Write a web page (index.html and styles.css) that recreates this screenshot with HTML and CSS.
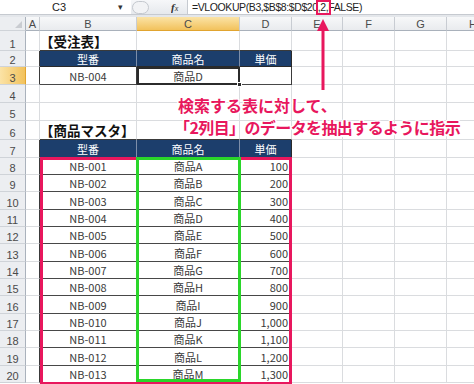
FILE: index.html
```html
<!DOCTYPE html>
<html lang="ja">
<head>
  <meta charset="UTF-8">
  <title>VLOOKUP 列番号</title>
  <link rel="stylesheet" href="styles.css">
</head>
<body>
  <div class="app">

    <!-- FORMULA BAR -->
    <div class="fbar">
      <div class="name-box">
        <span class="name">C3</span>
        <span class="dd">&#9662;</span>
      </div>
      <div class="grip"><span></span></div>
      <div class="fx"><i>f</i><small>x</small></div>
      <div class="formula">=VLOOKUP(B3,$B$8:$D$20,<span class="hl">2,</span>FALSE)</div>
    </div>
    <div class="fbar-gap"></div>

    <!-- SHEET -->
    <table class="sheet">
      <colgroup>
        <col class="c-rh"><col class="c-a"><col class="c-b"><col class="c-c"><col class="c-d">
        <col class="c-e"><col class="c-f"><col class="c-g"><col class="c-h">
      </colgroup>
      <tr class="colhdr">
        <th class="corner"><span></span></th><th>A</th><th>B</th><th class="sel">C</th><th>D</th><th>E</th><th>F</th><th>G</th><th>H</th>
      </tr>
      <tr class="h20">
        <th>1</th><td></td><td class="title bb">【受注表】</td><td class="bb"></td><td class="bb"></td><td></td><td></td><td></td><td></td>
      </tr>
      <tr class="h16">
        <th>2</th><td class="br"></td><td class="hd">型番</td><td class="hd">商品名</td><td class="hd last">単価</td><td></td><td></td><td></td><td></td>
      </tr>
      <tr class="h18">
        <th class="sel">3</th><td class="br"></td><td class="dt">NB-004</td><td class="dt active">商品D</td><td class="dt"></td><td></td><td></td><td></td><td></td>
      </tr>
      <tr class="h18">
        <th>4</th><td></td><td></td><td></td><td></td><td></td><td></td><td></td><td></td>
      </tr>
      <tr class="h18">
        <th>5</th><td></td><td></td><td></td><td></td><td></td><td></td><td></td><td></td>
      </tr>
      <tr class="h19">
        <th>6</th><td></td><td class="title bb">【商品マスタ】</td><td class="bb"></td><td class="bb"></td><td></td><td></td><td></td><td></td>
      </tr>
      <tr class="h18">
        <th>7</th><td class="br"></td><td class="hd">型番</td><td class="hd">商品名</td><td class="hd last">単価</td><td></td><td></td><td></td><td></td>
      </tr>
      <tr class="h17"><th>8</th><td class="br"></td><td class="dt">NB-001</td><td class="dt">商品A</td><td class="dt num">100</td><td></td><td></td><td></td><td></td></tr>
      <tr class="h17"><th>9</th><td class="br"></td><td class="dt">NB-002</td><td class="dt">商品B</td><td class="dt num">200</td><td></td><td></td><td></td><td></td></tr>
      <tr class="h18"><th>10</th><td class="br"></td><td class="dt">NB-003</td><td class="dt">商品C</td><td class="dt num">300</td><td></td><td></td><td></td><td></td></tr>
      <tr class="h17"><th>11</th><td class="br"></td><td class="dt">NB-004</td><td class="dt">商品D</td><td class="dt num">400</td><td></td><td></td><td></td><td></td></tr>
      <tr class="h17"><th>12</th><td class="br"></td><td class="dt">NB-005</td><td class="dt">商品E</td><td class="dt num">500</td><td></td><td></td><td></td><td></td></tr>
      <tr class="h18"><th>13</th><td class="br"></td><td class="dt">NB-006</td><td class="dt">商品F</td><td class="dt num">600</td><td></td><td></td><td></td><td></td></tr>
      <tr class="h17"><th>14</th><td class="br"></td><td class="dt">NB-007</td><td class="dt">商品G</td><td class="dt num">700</td><td></td><td></td><td></td><td></td></tr>
      <tr class="h17"><th>15</th><td class="br"></td><td class="dt">NB-008</td><td class="dt">商品H</td><td class="dt num">800</td><td></td><td></td><td></td><td></td></tr>
      <tr class="h18"><th>16</th><td class="br"></td><td class="dt">NB-009</td><td class="dt">商品I</td><td class="dt num">900</td><td></td><td></td><td></td><td></td></tr>
      <tr class="h17"><th>17</th><td class="br"></td><td class="dt">NB-010</td><td class="dt">商品J</td><td class="dt num">1,000</td><td></td><td></td><td></td><td></td></tr>
      <tr class="h17"><th>18</th><td class="br"></td><td class="dt">NB-011</td><td class="dt">商品K</td><td class="dt num">1,100</td><td></td><td></td><td></td><td></td></tr>
      <tr class="h18"><th>19</th><td class="br"></td><td class="dt">NB-012</td><td class="dt">商品L</td><td class="dt num">1,200</td><td></td><td></td><td></td><td></td></tr>
      <tr class="h17"><th>20</th><td class="br"></td><td class="dt">NB-013</td><td class="dt">商品M</td><td class="dt num">1,300</td><td></td><td></td><td></td><td></td></tr>
    </table>

    <!-- Annotations drawn over the sheet -->
    <div class="mark mark-range"></div>
    <div class="mark mark-col"></div>

    <svg class="arrow" width="16" height="76" viewBox="0 0 16 76">
      <polygon points="8,2 2,14 14,14" fill="#e8175d"/>
      <rect x="6.5" y="12" width="3" height="61" fill="#e8175d"/>
    </svg>

    <div class="note">
      <div class="l1">検索する表に対して、</div>
      <div class="l2">「2列目」のデータを抽出するように指示</div>
    </div>

  </div>
</body>
</html>
```

FILE: styles.css
```css
body {
  margin: 0;
  background: #fff;
  font-family: "Liberation Sans", Arial, sans-serif;
  overflow: hidden;
}

.app {
  position: relative;
  width: 474px;
  height: 384px;
  overflow: hidden;
}

/* Formula bar */
.fbar {
  display: flex;
  height: 14px;
  border-bottom: 1px solid #c6cad0;
  font-size: 11px;
  line-height: 14px;
  color: #222;
}

.fbar-gap {
  height: 2px;
  background: #e4e7eb;
}

.name-box {
  width: 131px;
  display: flex;
  align-items: center;
  background: #fff;
}

.name-box .name {
  width: 118px;
  text-align: center;
}

.name-box .dd {
  font-size: 9px;
  color: #333;
}

.grip {
  width: 40px;
  background: linear-gradient(#f6f7f9, #e6e9ed);
  position: relative;
}

.grip span {
  position: absolute;
  left: 1px;
  top: 1px;
  width: 15px;
  height: 11px;
  border: 1px solid #c4c8ce;
  border-radius: 7px;
  background: #f2f3f5;
}

.fx {
  width: 14px;
  padding-right: 2px;
  background: linear-gradient(#f6f7f9, #e6e9ed);
  font-family: "Liberation Serif", serif;
  font-size: 11px;
  color: #333;
  border-right: 1px solid #c6cad0;
}

.fx i {
  font-weight: bold;
}

.fx small {
  font-size: 8px;
  font-style: italic;
}

.formula {
  flex: 1;
  padding-left: 4px;
  background: #fff;
  white-space: nowrap;
  font-size: 10.5px;
  letter-spacing: -0.4px;
}

.formula .hl {
  position: relative;
}

.formula .hl::after {
  content: '';
  position: absolute;
  left: -4px;
  right: -3px;
  top: -1px;
  bottom: -2px;
  border: 2px solid #e8175d;
}

/* Sheet grid */
.sheet {
  border-collapse: separate;
  border-spacing: 0;
  table-layout: fixed;
  width: 500px;
  font-family: "Noto Sans CJK JP", sans-serif;
  font-size: 11px;
  color: #3a3a3a;
}

.c-rh { width: 26px; }
.c-a { width: 14px; }
.c-b { width: 97px; }
.c-c { width: 103px; }
.c-d { width: 52px; }
.c-e { width: 51px; }
.c-f { width: 52px; }
.c-g { width: 52px; }
.c-h { width: 53px; }

.sheet th,
.sheet td {
  padding: 0;
  box-sizing: border-box;
  border-right: 1px solid #dadcdf;
  border-bottom: 1px solid #dadcdf;
  white-space: nowrap;
  overflow: hidden;
}

.colhdr { height: 14px; }
.h16 { height: 16px; }
.h17 { height: 17px; }
.h18 { height: 18px; }
.h19 { height: 19px; }
.h20 { height: 20px; }

.colhdr th {
  font-family: "Liberation Sans", Arial, sans-serif;
  font-weight: normal;
  font-size: 11px;
  line-height: 12px;
  color: #4a4a4a;
  background: linear-gradient(#f7f8f9, #e9ebee);
  border-right-color: #c8ccd2;
  border-bottom-color: #a9b1bb;
}

.colhdr th.sel {
  background: linear-gradient(#fbe3a6, #f2c25c);
  border-bottom-color: #e1a42f;
}

.colhdr .corner {
  position: relative;
}

.colhdr .corner span {
  position: absolute;
  right: 3px;
  bottom: 2px;
  width: 0;
  height: 0;
  border-left: 7px solid transparent;
  border-bottom: 7px solid #c9ccd1;
}

.sheet tr > th:first-child {
  font-family: "Liberation Sans", Arial, sans-serif;
  font-weight: normal;
  font-size: 11px;
  color: #4a4a4a;
  background: #eceef1;
  border-right-color: #aab2bc;
  border-bottom-color: #cfd3d8;
  vertical-align: bottom;
  line-height: 12px;
}

.sheet tr > th.sel:first-child {
  background: linear-gradient(90deg, #fbe3a6, #f2c25c);
  border-right-color: #e1a42f;
}

.sheet td {
  text-align: center;
  line-height: 14px;
}

.sheet td.title {
  text-align: left;
  font-weight: bold;
  font-size: 13.5px;
  line-height: 16px;
  color: #111;
  vertical-align: middle;
  overflow: visible;
}

.sheet td.bb { border-bottom-color: #3a3a3a; }
.sheet td.br { border-right-color: #3a3a3a; }

.sheet td.hd {
  background: #1c3e6c;
  color: #fff;
  border-right-color: #7d8ea9;
  border-bottom-color: #2a2a2a;
}

.sheet td.hd.last { border-right-color: #2a2a2a; }

.sheet td.dt {
  border-right-color: #3a3a3a;
  border-bottom-color: #474747;
}

.sheet td.num {
  text-align: right;
  padding-right: 3px;
}

.sheet td.active {
  position: relative;
  outline: 2px solid #2b2b2b;
  outline-offset: -2px;
  overflow: visible;
}

.sheet td.active::after {
  content: '';
  position: absolute;
  right: -3px;
  bottom: -3px;
  width: 5px;
  height: 5px;
  background: #2b2b2b;
  border: 1px solid #fff;
  box-sizing: border-box;
}

/* Highlight boxes */
.mark {
  position: absolute;
  box-sizing: border-box;
  pointer-events: none;
}

.mark-range {
  left: 40px;
  top: 157px;
  width: 252px;
  height: 228px;
  border: 3px solid #e8175d;
}

.mark-col {
  left: 136px;
  top: 157px;
  width: 105px;
  height: 225px;
  border: 3px solid #2ad62a;
}

.arrow {
  position: absolute;
  left: 315px;
  top: 17px;
}

.note {
  position: absolute;
  left: 170px;
  top: 94px;
  font-family: "Noto Sans CJK JP", sans-serif;
  font-weight: bold;
  font-size: 16px;
  line-height: 22px;
  color: #e8175d;
  white-space: nowrap;
  text-shadow:
    1.5px 0 0 #fff, -1.5px 0 0 #fff, 0 1.5px 0 #fff, 0 -1.5px 0 #fff,
    1px 1px 0 #fff, -1px -1px 0 #fff, 1px -1px 0 #fff, -1px 1px 0 #fff;
}

.note .l1 {
  padding-left: 8px;
}

.note .l2 {
  padding-left: 4px;
  letter-spacing: -0.6px;
}
```
